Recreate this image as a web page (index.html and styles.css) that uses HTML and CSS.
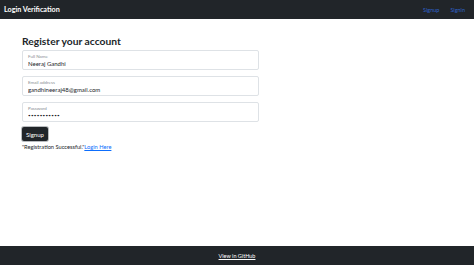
FILE: index.html
```html
<!DOCTYPE html>
<html lang="en">
<head>
    <meta charset="UTF-8">
    <meta name="viewport" content="width=device-width, initial-scale=1.0">
    <title>Login Verification</title>
    <link rel="stylesheet" href="styles.css">
</head>
<body>
    <nav class="navbar">
        <a class="brand" href="#">Login Verification</a>
        <div class="nav-links">
            <a href="#">Signup</a>
            <a href="#">Signin</a>
        </div>
    </nav>

    <main class="page">
        <h2 class="title">Register your account</h2>
        <form class="form">
            <div class="field">
                <label>Full Name</label>
                <input type="text" value="Neeraj Gandhi">
            </div>
            <div class="field">
                <label>Email address</label>
                <input type="email" value="gandhineeraj48@gmail.com">
            </div>
            <div class="field">
                <label>Password</label>
                <input type="password" value="secret12345">
            </div>
            <button type="button" class="signup-btn">Signup</button>
        </form>
        <p class="status">"Registration Successful."<a href="#">Login Here</a></p>
    </main>

    <footer class="footer">
        <a href="#">View in GitHub</a>
    </footer>
</body>
</html>
```

FILE: styles.css
```css
* {
    margin: 0;
    padding: 0;
    box-sizing: border-box;
}

body {
    font-family: Lato, "Open Sans", sans-serif;
    background: #fff;
    color: #212529;
    min-height: 265px;
    display: flex;
    flex-direction: column;
}

.navbar {
    height: 19px;
    background: #212529;
    display: flex;
    align-items: center;
    justify-content: space-between;
    padding: 0 9px 0 4px;
}

.brand {
    color: #fff;
    font-size: 7.2px;
    font-weight: 700;
    text-decoration: none;
}

.nav-links {
    display: flex;
    gap: 11px;
}

.nav-links a {
    color: #2f63c9;
    font-size: 5.5px;
    text-decoration: none;
}

.page {
    flex: 1;
    padding: 15px 0 0 22px;
}

.title {
    font-size: 10.3px;
    font-weight: 700;
    line-height: 15px;
    margin-bottom: 1px;
}

.form {
    width: 237px;
    display: flex;
    flex-direction: column;
    gap: 6px;
}

.field {
    height: 20px;
    border: 1px solid #dee2e6;
    border-radius: 2px;
    padding: 3px 5px 0;
    display: flex;
    flex-direction: column;
}

.field label {
    font-size: 4.5px;
    color: #8a8f94;
    line-height: 6px;
}

.field input {
    border: none;
    outline: none;
    font-family: inherit;
    font-size: 6px;
    color: #212529;
    background: transparent;
    line-height: 8px;
}

.field input[type="password"] {
    font-size: 4.5px;
    letter-spacing: 0.3px;
}

.signup-btn {
    align-self: flex-start;
    margin-top: -1px;
    width: 26px;
    height: 14px;
    background: #212529;
    color: #fff;
    border: none;
    border-radius: 2px;
    box-shadow: 0 0 0 1px #b9bcbf;
    font-family: inherit;
    font-size: 6px;
}

.status {
    font-size: 5.7px;
    margin-top: 2px;
    color: #212529;
}

.status a {
    color: #0d6efd;
}

.footer {
    height: 19px;
    background: #212529;
    display: flex;
    align-items: center;
    justify-content: center;
}

.footer a {
    color: #fff;
    font-size: 5.5px;
}
```
